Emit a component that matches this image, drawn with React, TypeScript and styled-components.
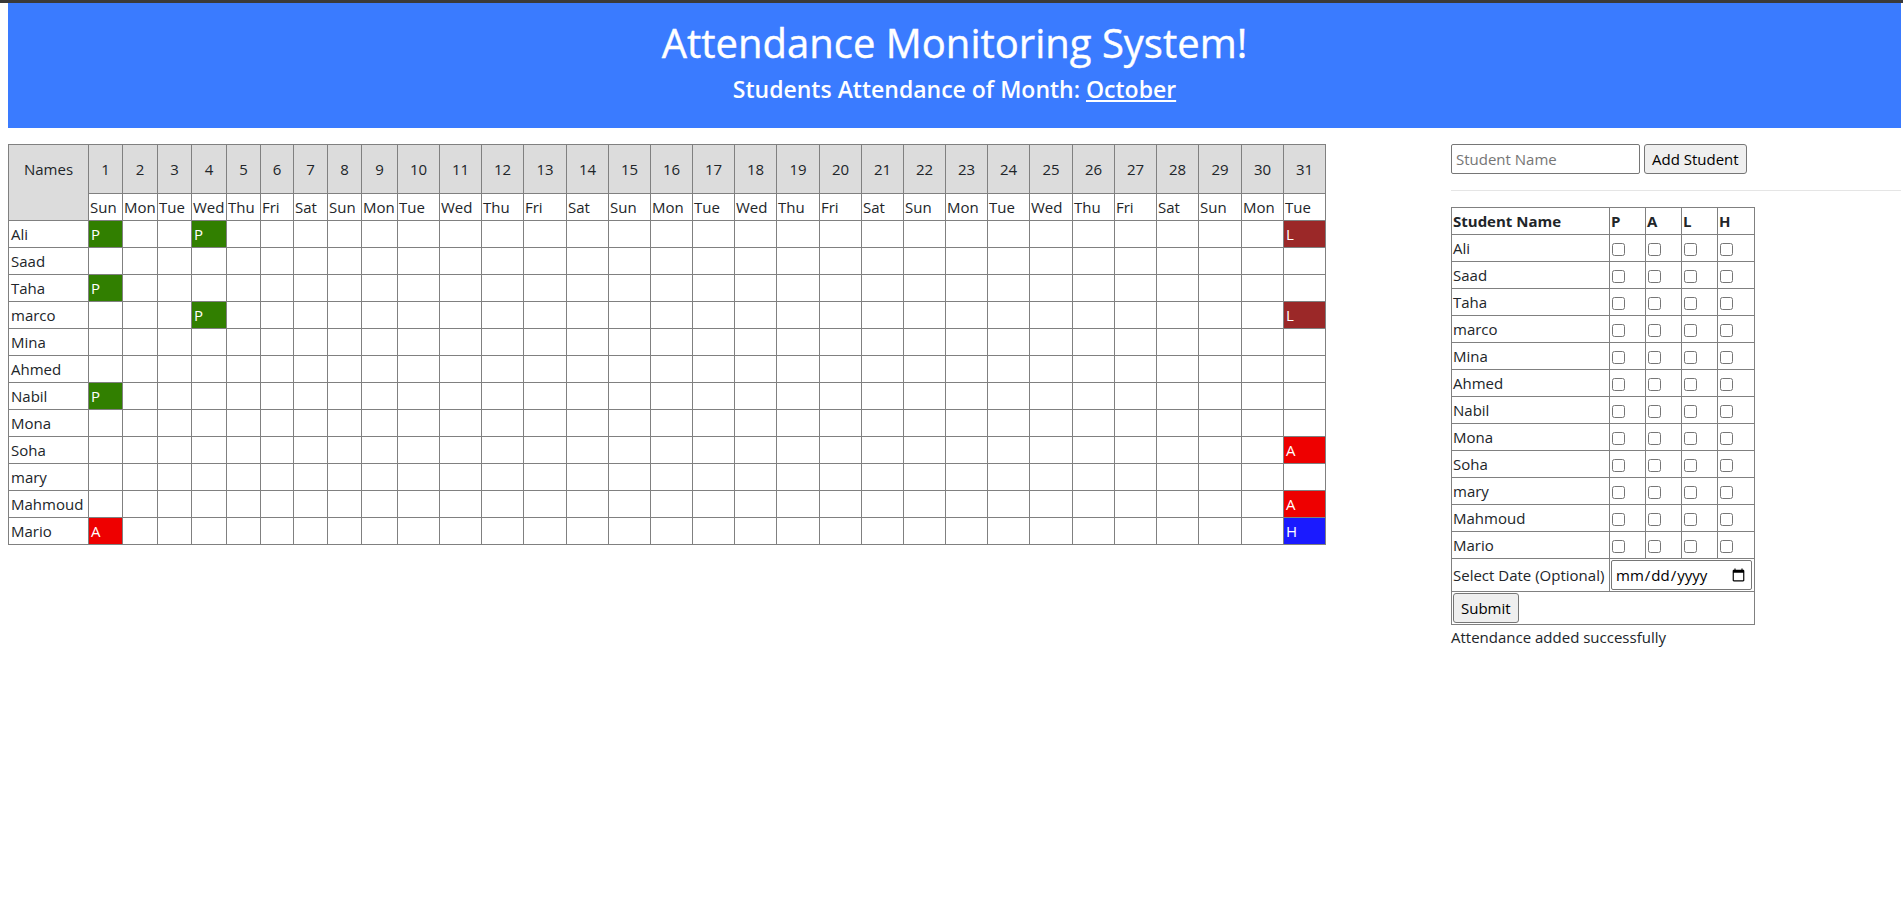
import React from "react";
import styled, { createGlobalStyle } from "styled-components";

type Status = "P" | "A" | "L" | "H";

const GlobalStyle = createGlobalStyle`
  html {
    border-top: 3px solid #3a3a3a;
  }
  body {
    margin: 0 2px 8px 8px;
    font-family: "Open Sans", "Noto Sans", sans-serif;
    font-size: 15px;
    line-height: 24px;
    color: #212529;
    background: #fff;
  }
`;

const Header = styled.header`
  background-color: #3a7bff;
  color: #fff;
  text-align: center;
  padding: 16px;
  margin-bottom: 16px;
`;

const Title = styled.h1`
  margin: 0 0 8px;
  font-size: 40px;
  font-weight: 500;
  line-height: 48px;
  -webkit-text-stroke: 0.4px #fff;
`;

const Subtitle = styled.h4`
  margin: 0 0 8px;
  font-size: 23px;
  font-weight: 600;
  line-height: 29px;
`;

const Month = styled.span`
  text-decoration: underline;
`;

const Layout = styled.main`
  display: flex;
  align-items: flex-start;
`;

const SheetArea = styled.section`
  flex: 0 0 1443px;
`;

const SidePanel = styled.aside`
  flex: 1;
  min-width: 0;
`;

const Sheet = styled.table`
  border-collapse: collapse;
  table-layout: fixed;
  width: 1317px;

  th,
  td {
    border: 1px solid #808080;
    white-space: nowrap;
    overflow: visible;
  }
`;

const Col = styled.col<{ $w: number }>`
  width: ${(p) => p.$w}px;
`;

const HeadCell = styled.th`
  background-color: #dcdcdc;
  font-weight: 400;
  text-align: center;
  vertical-align: top;
  padding: 12px 0;
`;

const DayCell = styled.td`
  padding: 1px 1px;
  text-align: left;
`;

const NameCell = styled.td`
  padding: 1px 2px;
`;

const markColors: Record<Status, string> = {
  P: "#317f00",
  A: "#ee0000",
  L: "#9b2828",
  H: "#1a1aff",
};

const MarkCell = styled.td<{ $status?: Status }>`
  padding: 1px 2px;
  height: 24px;
  color: #fff;
  background-color: ${(p) => (p.$status ? markColors[p.$status] : "transparent")};
`;

const AddForm = styled.div`
  display: flex;
  gap: 4px;
  align-items: center;
`;

const NameInput = styled.input`
  box-sizing: border-box;
  width: 189px;
  height: 30px;
  padding: 1px 4px;
  border: 1px solid #767676;
  border-radius: 2px;
  font: inherit;
  color: #212529;

  &::placeholder {
    color: #757575;
  }
`;

const Button = styled.button`
  box-sizing: border-box;
  height: 30px;
  padding: 1px 7px;
  border: 1px solid #767676;
  border-radius: 3px;
  background-color: #efefef;
  font: inherit;
  color: #000;
`;

const Divider = styled.hr`
  margin: 16px 0;
  border: 0;
  border-top: 1px solid rgba(0, 0, 0, 0.1);
`;

const MarkTable = styled.table`
  border-collapse: collapse;
  table-layout: fixed;
  width: 303px;

  th,
  td {
    border: 1px solid #808080;
    padding: 1px;
    text-align: left;
    white-space: nowrap;
  }
`;

const MarkHead = styled.th`
  font-weight: 700;
`;

const Check = styled.input`
  width: 13px;
  height: 13px;
  margin: 0 0 0 1px;
  vertical-align: middle;
`;

const DateInput = styled.input`
  box-sizing: border-box;
  width: 141px;
  height: 30px;
  margin: 0;
  padding: 1px 3px;
  border: 1px solid #767676;
  border-radius: 2px;
  font: inherit;
  vertical-align: middle;
`;

const Message = styled.p`
  margin: 0;
`;

const students = [
  "Ali",
  "Saad",
  "Taha",
  "marco",
  "Mina",
  "Ahmed",
  "Nabil",
  "Mona",
  "Soha",
  "mary",
  "Mahmoud",
  "Mario",
];

const marks: Record<string, Record<number, Status>> = {
  Ali: { 1: "P", 4: "P", 31: "L" },
  Taha: { 1: "P" },
  marco: { 4: "P", 31: "L" },
  Nabil: { 1: "P" },
  Soha: { 31: "A" },
  Mahmoud: { 31: "A" },
  Mario: { 1: "A", 31: "H" },
};

const weekDays = ["Sun", "Mon", "Tue", "Wed", "Thu", "Fri", "Sat"];
const days = Array.from({ length: 31 }, (_, i) => i + 1);

// widths taken from the layout the original table settled into
const dayWidth = (d: number) => {
  const small = [34, 35, 34, 35, 34, 33, 34, 34, 36];
  if (d <= 9) return small[d - 1];
  return [13, 19, 25, 29].includes(d) ? 43 : 42;
};

const App = () => {
  return (
    <>
      <GlobalStyle />
      <Header>
        <Title>Attendance Monitoring System!</Title>
        <Subtitle>
          Students Attendance of Month: <Month>October</Month>
        </Subtitle>
      </Header>
      <Layout>
        <SheetArea>
          <Sheet>
            <colgroup>
              <Col $w={80} />
              {days.map((d) => (
                <Col key={d} $w={dayWidth(d)} />
              ))}
            </colgroup>
            <thead>
              <tr>
                <HeadCell rowSpan={2}>Names</HeadCell>
                {days.map((d) => (
                  <HeadCell key={d}>{d}</HeadCell>
                ))}
              </tr>
              <tr>
                {days.map((d) => (
                  <DayCell key={d}>{weekDays[(d - 1) % 7]}</DayCell>
                ))}
              </tr>
            </thead>
            <tbody>
              {students.map((name) => (
                <tr key={name}>
                  <NameCell>{name}</NameCell>
                  {days.map((d) => {
                    const status = marks[name]?.[d];
                    return (
                      <MarkCell key={d} $status={status}>
                        {status}
                      </MarkCell>
                    );
                  })}
                </tr>
              ))}
            </tbody>
          </Sheet>
        </SheetArea>
        <SidePanel>
          <AddForm>
            <NameInput placeholder="Student Name" />
            <Button>Add Student</Button>
          </AddForm>
          <Divider />
          <MarkTable>
            <colgroup>
              <Col $w={158} />
              <Col $w={36} />
              <Col $w={36} />
              <Col $w={36} />
              <Col $w={37} />
            </colgroup>
            <thead>
              <tr>
                <MarkHead>Student Name</MarkHead>
                <MarkHead>P</MarkHead>
                <MarkHead>A</MarkHead>
                <MarkHead>L</MarkHead>
                <MarkHead>H</MarkHead>
              </tr>
            </thead>
            <tbody>
              {students.map((name) => (
                <tr key={name}>
                  <td>{name}</td>
                  {(["P", "A", "L", "H"] as Status[]).map((s) => (
                    <td key={s}>
                      <Check type="checkbox" />
                    </td>
                  ))}
                </tr>
              ))}
              <tr>
                <td>Select Date (Optional)</td>
                <td colSpan={4}>
                  <DateInput type="date" />
                </td>
              </tr>
              <tr>
                <td colSpan={5}>
                  <Button>Submit</Button>
                </td>
              </tr>
            </tbody>
          </MarkTable>
          <Message>Attendance added successfully</Message>
        </SidePanel>
      </Layout>
    </>
  );
};

export default App;
